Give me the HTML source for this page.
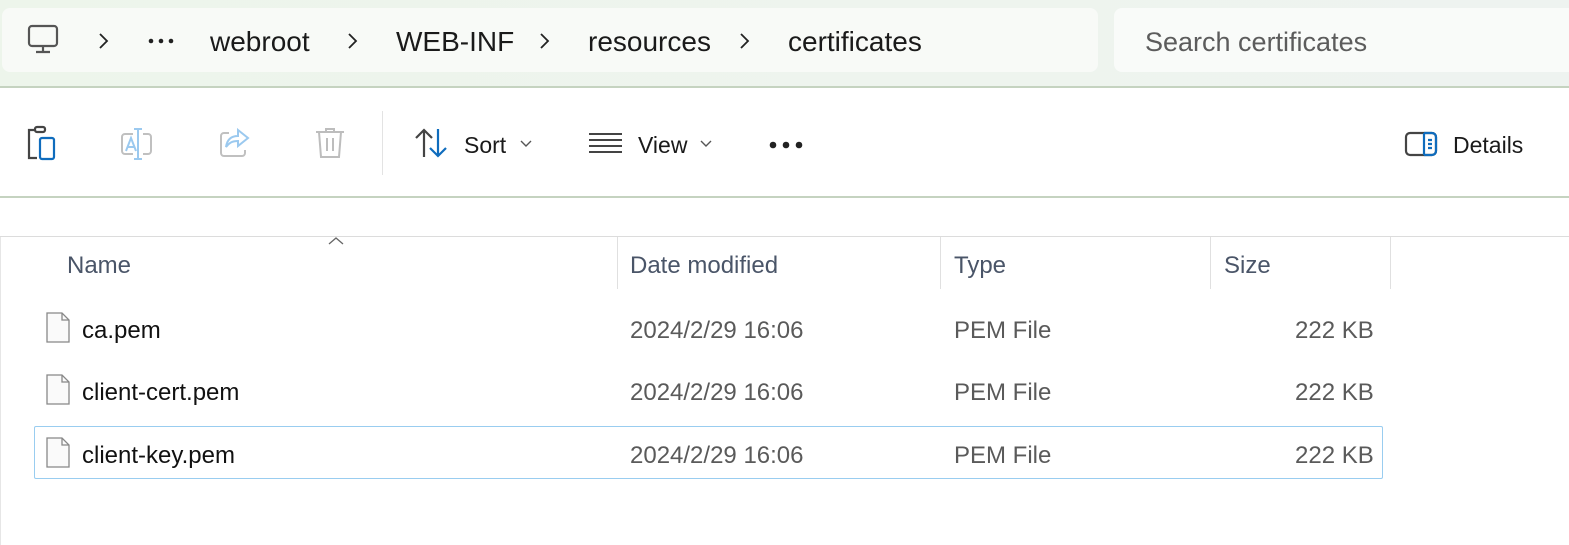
<!DOCTYPE html>
<html><head><meta charset="utf-8"><style>
*{margin:0;padding:0;box-sizing:border-box}
body{width:1569px;height:545px;background:#fff;font-family:"Liberation Sans",sans-serif;position:relative;overflow:hidden;color:#1a1a1a}
.top{position:absolute;left:0;top:0;width:1569px;height:88px;background:linear-gradient(90deg,#edf5eb,#eef3f0);border-bottom:2px solid #c5d3c0}
.bc{position:absolute;left:2px;top:8px;width:1096px;height:64px;background:#f8faf7;border-radius:8px}
.sr{position:absolute;left:1114px;top:8px;width:470px;height:64px;background:#f9fbf9;border-radius:8px}
.t{position:absolute;white-space:nowrap}
.line2{position:absolute;left:0;top:196px;width:1569px;height:2px;background:#c5d3c0}
.hdr{position:absolute;left:0;top:236px;width:1569px;height:1px;background:#dcdcdc}
.vs{position:absolute;top:237px;width:1px;height:52px;background:#e0e0e0}
.h{font-size:24px;color:#4a5568;top:252px}
.r{font-size:24px;color:#111}
.g{color:#5a5a5a}
.sel{position:absolute;left:34px;top:426px;width:1349px;height:53px;border:1px solid #99cdf0;border-radius:2px}
.bt{font-size:28px;top:26px}
</style></head><body>
<div class="top"></div>
<div class="bc"></div>
<div class="sr"></div>
<svg class="t" style="left:27px;top:24px" width="34" height="32" viewBox="0 0 34 32" fill="none" stroke="#555" stroke-width="2.2"><rect x="2" y="2" width="28" height="20" rx="3"/><path d="M16 22v5M9 28h14"/></svg>
<svg class="t" style="left:98px;top:32px" width="12" height="18" viewBox="0 0 12 18" fill="none" stroke="#222" stroke-width="1.8"><path d="M2 2l7 7-7 7"/></svg>
<svg class="t" style="left:148px;top:37px" width="28" height="8" viewBox="0 0 28 8" fill="#222"><circle cx="3" cy="4" r="2.3"/><circle cx="13" cy="4" r="2.3"/><circle cx="23" cy="4" r="2.3"/></svg>
<div class="t bt" style="left:210px">webroot</div>
<svg class="t" style="left:347px;top:32px" width="12" height="18" viewBox="0 0 12 18" fill="none" stroke="#222" stroke-width="1.8"><path d="M2 2l7 7-7 7"/></svg>
<div class="t bt" style="left:396px">WEB-INF</div>
<svg class="t" style="left:539px;top:32px" width="12" height="18" viewBox="0 0 12 18" fill="none" stroke="#222" stroke-width="1.8"><path d="M2 2l7 7-7 7"/></svg>
<div class="t bt" style="left:588px">resources</div>
<svg class="t" style="left:739px;top:32px" width="12" height="18" viewBox="0 0 12 18" fill="none" stroke="#222" stroke-width="1.8"><path d="M2 2l7 7-7 7"/></svg>
<div class="t bt" style="left:788px">certificates</div>
<div class="t" style="left:1145px;top:27px;font-size:27px;color:#5c5c5c">Search certificates</div>

<svg class="t" style="left:26px;top:125px" width="32" height="36" viewBox="0 0 32 36" fill="none" stroke-width="2.2"><path d="M9 5H3v28h8" stroke="#444"/><rect x="9" y="2" width="10" height="5" rx="2" stroke="#444"/><rect x="14" y="13" width="14" height="21" rx="2" stroke="#0f6cbd"/></svg>
<svg class="t" style="left:121px;top:127px" width="34" height="34" viewBox="0 0 34 34" fill="none" stroke-width="2"><path d="M12 7H4a3 3 0 0 0-3 3v14a3 3 0 0 0 3 3h8M22 7h5a3 3 0 0 1 3 3v14a3 3 0 0 1-3 3h-5" stroke="#c0c0c0"/><path d="M17 2v30M13 2h8M13 32h8M5 24l5-13 5 13M7 20h6" stroke="#9bc9ef"/></svg>
<svg class="t" style="left:219px;top:127px" width="32" height="32" viewBox="0 0 32 32" fill="none" stroke-width="2"><path d="M10 6H5a3 3 0 0 0-3 3v17a3 3 0 0 0 3 3h18a3 3 0 0 0 3-3v-3" stroke="#c0c0c0"/><path d="M19 3l10 8-10 8v-5c-6 0-9 2-12 6 1-7 5-11 12-11z" stroke="#9bc9ef"/></svg>
<svg class="t" style="left:314px;top:126px" width="32" height="34" viewBox="0 0 32 34" fill="none" stroke="#bdbdbd" stroke-width="2"><path d="M2 6h28M12 6V3h8v3M5 6l2 25h18l2-25M13 12v13M19 12v13"/></svg>
<div style="position:absolute;left:382px;top:111px;width:1px;height:64px;background:#e3e3e3"></div>
<svg class="t" style="left:414px;top:127px" width="36" height="32" viewBox="0 0 36 32" fill="none" stroke-width="2.2"><path d="M10 30V3M2 11l8-8 8 8" stroke="#444"/><path d="M24 2v27M16 21l8 8 8-8" stroke="#0f6cbd"/></svg>
<div class="t" style="left:464px;top:132px;font-size:23px">Sort</div>
<svg class="t" style="left:520px;top:140px" width="12" height="8" viewBox="0 0 12 8" fill="none" stroke="#555" stroke-width="1.4"><path d="M1 1l5 5 5-5"/></svg>
<svg class="t" style="left:589px;top:132px" width="34" height="22" viewBox="0 0 34 22" stroke="#444" stroke-width="2"><path d="M0 2h33M0 8h33M0 14h33M0 20h33"/></svg>
<div class="t" style="left:638px;top:132px;font-size:23px">View</div>
<svg class="t" style="left:700px;top:140px" width="12" height="8" viewBox="0 0 12 8" fill="none" stroke="#555" stroke-width="1.4"><path d="M1 1l5 5 5-5"/></svg>
<svg class="t" style="left:769px;top:140px" width="34" height="10" viewBox="0 0 34 10" fill="#222"><circle cx="4" cy="5" r="3.3"/><circle cx="17" cy="5" r="3.3"/><circle cx="30" cy="5" r="3.3"/></svg>
<svg class="t" style="left:1404px;top:131px" width="34" height="26" viewBox="0 0 34 26" fill="none" stroke-width="2.2"><rect x="2" y="2" width="30" height="22" rx="4" stroke="#444"/><path d="M20 2v22" stroke="#0f6cbd"/><path d="M20 2h8a4 4 0 0 1 4 4v14a4 4 0 0 1-4 4h-8M24 9h4M24 13h4M24 17h4" stroke="#0f6cbd"/></svg>
<div class="t" style="left:1453px;top:132px;font-size:23px">Details</div>
<div class="line2"></div>

<div class="hdr"></div>
<div style="position:absolute;left:0;top:237px;width:1px;height:308px;background:#e6e6e6"></div>
<div class="vs" style="left:617px"></div><div class="vs" style="left:940px"></div><div class="vs" style="left:1210px"></div><div class="vs" style="left:1390px"></div>
<svg class="t" style="left:328px;top:236px" width="16" height="10" viewBox="0 0 16 10" fill="none" stroke="#666" stroke-width="1.3"><path d="M1 8l7-6 7 6"/></svg>
<div class="t h" style="left:67px">Name</div>
<div class="t h" style="left:630px">Date modified</div>
<div class="t h" style="left:954px">Type</div>
<div class="t h" style="left:1224px">Size</div>

<div class="sel"></div>
<svg class="t" style="left:46px;top:312px" width="25" height="32" viewBox="0 0 25 32" fill="#fafafa" stroke="#888" stroke-width="1.3"><path d="M1 1h15l7 7v22H1z"/><path d="M16 1v7h7" fill="none"/></svg>
<svg class="t" style="left:46px;top:374px" width="25" height="32" viewBox="0 0 25 32" fill="#fafafa" stroke="#888" stroke-width="1.3"><path d="M1 1h15l7 7v22H1z"/><path d="M16 1v7h7" fill="none"/></svg>
<svg class="t" style="left:46px;top:437px" width="25" height="32" viewBox="0 0 25 32" fill="#fafafa" stroke="#888" stroke-width="1.3"><path d="M1 1h15l7 7v22H1z"/><path d="M16 1v7h7" fill="none"/></svg>

<div class="t r" style="left:82px;top:317px">ca.pem</div>
<div class="t r g" style="left:630px;top:317px">2024/2/29 16:06</div>
<div class="t r g" style="left:954px;top:317px">PEM File</div>
<div class="t r g" style="left:1295px;top:317px">222 KB</div>

<div class="t r" style="left:82px;top:379px">client-cert.pem</div>
<div class="t r g" style="left:630px;top:379px">2024/2/29 16:06</div>
<div class="t r g" style="left:954px;top:379px">PEM File</div>
<div class="t r g" style="left:1295px;top:379px">222 KB</div>

<div class="t r" style="left:82px;top:442px">client-key.pem</div>
<div class="t r g" style="left:630px;top:442px">2024/2/29 16:06</div>
<div class="t r g" style="left:954px;top:442px">PEM File</div>
<div class="t r g" style="left:1295px;top:442px">222 KB</div>
</body></html>
